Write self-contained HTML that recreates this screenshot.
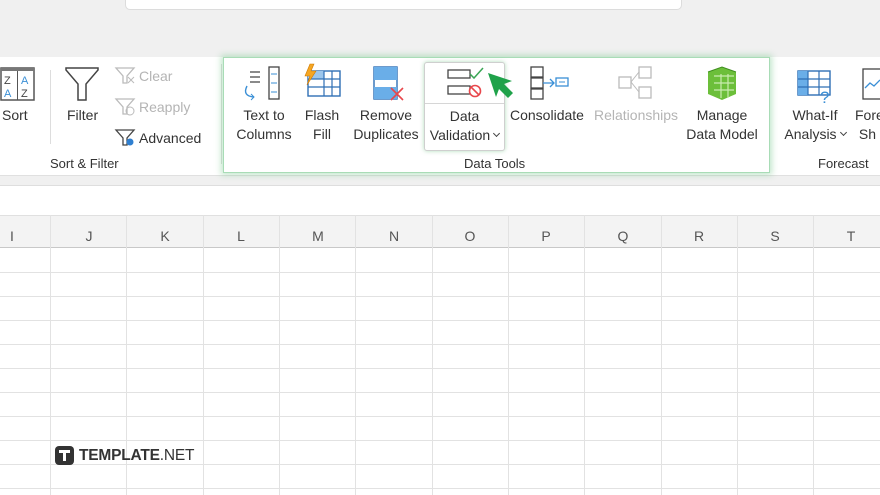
<!DOCTYPE html>
<html><head><meta charset="utf-8"><style>
*{margin:0;padding:0;box-sizing:border-box}
body{width:880px;height:495px;overflow:hidden;background:#fff;font-family:"Liberation Sans",sans-serif;position:relative;color:#333}
.a{position:absolute}
.t{position:absolute;font-size:14px;color:#333;text-align:center;line-height:19px;white-space:nowrap}
.g{color:#b4b4b4}
.col{position:absolute;top:228px;font-size:14px;color:#555;width:20px;text-align:center}
.ch{display:inline-block;width:5px;height:5px;border-right:1.2px solid #444;border-bottom:1.2px solid #444;transform:rotate(45deg);margin:0 0 4px 4px}
</style></head><body>
<div class="a" style="left:0;top:0;width:880px;height:57px;background:#f0f0f0"></div>
<div class="a" style="left:125px;top:-2px;width:557px;height:12px;background:#fff;border:1px solid #dcdcdc;border-radius:0 0 5px 5px"></div>
<div class="a" style="left:0;top:57px;width:880px;height:118px;background:#fff"></div>
<div class="a" style="left:0;top:175px;width:880px;height:11px;background:#f0f0f0;border-top:1px solid #e0e0e0;border-bottom:1px solid #dedede"></div>
<div class="a" style="left:0;top:215px;width:880px;height:33px;background:#f3f3f3;border-top:1px solid #e0e0e0;border-bottom:1px solid #c8c8c8"></div>
<svg class="a" style="left:0;top:215px" width="880" height="280">
<g stroke="#e2e2e2" stroke-width="1">
<line x1="50.5" y1="0" x2="50.5" y2="280"/><line x1="126.5" y1="0" x2="126.5" y2="280"/><line x1="203.5" y1="0" x2="203.5" y2="280"/><line x1="279.5" y1="0" x2="279.5" y2="280"/><line x1="355.5" y1="0" x2="355.5" y2="280"/><line x1="432.5" y1="0" x2="432.5" y2="280"/><line x1="508.5" y1="0" x2="508.5" y2="280"/><line x1="584.5" y1="0" x2="584.5" y2="280"/><line x1="661.5" y1="0" x2="661.5" y2="280"/><line x1="737.5" y1="0" x2="737.5" y2="280"/><line x1="813.5" y1="0" x2="813.5" y2="280"/>
<line x1="0" y1="57.5" x2="880" y2="57.5"/><line x1="0" y1="81.5" x2="880" y2="81.5"/><line x1="0" y1="105.5" x2="880" y2="105.5"/><line x1="0" y1="129.5" x2="880" y2="129.5"/><line x1="0" y1="153.5" x2="880" y2="153.5"/><line x1="0" y1="177.5" x2="880" y2="177.5"/><line x1="0" y1="201.5" x2="880" y2="201.5"/><line x1="0" y1="225.5" x2="880" y2="225.5"/><line x1="0" y1="249.5" x2="880" y2="249.5"/><line x1="0" y1="273.5" x2="880" y2="273.5"/>
</g></svg>
<div class="col" style="left:2px">I</div><div class="col" style="left:79px">J</div><div class="col" style="left:155px">K</div><div class="col" style="left:231px">L</div><div class="col" style="left:308px">M</div><div class="col" style="left:384px">N</div><div class="col" style="left:460px">O</div><div class="col" style="left:536px">P</div><div class="col" style="left:613px">Q</div><div class="col" style="left:689px">R</div><div class="col" style="left:765px">S</div><div class="col" style="left:841px">T</div>

<svg class="a" style="left:0;top:66px" width="36" height="36"><rect x="1" y="2" width="33" height="32" fill="none" stroke="#555" stroke-width="1.5"/><rect x="1" y="2" width="33" height="3" fill="#777"/><line x1="17.5" y1="5" x2="17.5" y2="34" stroke="#555"/><text x="4" y="18" font-size="11" fill="#444" font-family="Liberation Sans">Z</text><text x="4" y="31" font-size="11" fill="#3a8fd6" font-family="Liberation Sans">A</text><text x="21" y="18" font-size="11" fill="#3a8fd6" font-family="Liberation Sans">A</text><text x="21" y="31" font-size="11" fill="#444" font-family="Liberation Sans">Z</text></svg>
<div class="t" style="left:2px;top:106px">Sort</div>
<div class="a" style="left:50px;top:70px;width:1px;height:74px;background:#ddd"></div>
<svg class="a" style="left:65px;top:66px" width="36" height="36"><path d="M1 2 H33 V4 L21 18 V34 H13 V18 L1 4Z" fill="none" stroke="#444" stroke-width="1.5"/></svg>
<div class="t" style="left:67px;top:106px">Filter</div>
<svg class="a" style="left:114px;top:66px" width="24" height="20"><path d="M2 2H20L13 10V17H9V10Z" fill="none" stroke="#bbb" stroke-width="1.3"/><path d="M14 11l6 6M20 11l-6 6" stroke="#bbb"/></svg>
<div class="t g" style="left:139px;top:67px">Clear</div>
<svg class="a" style="left:114px;top:97px" width="24" height="20"><path d="M2 2H20L13 10V17H9V10Z" fill="none" stroke="#bbb" stroke-width="1.3"/><circle cx="16" cy="14" r="4" fill="none" stroke="#bbb"/></svg>
<div class="t g" style="left:139px;top:98px">Reapply</div>
<svg class="a" style="left:114px;top:128px" width="24" height="20"><path d="M2 2H20L13 10V17H9V10Z" fill="none" stroke="#444" stroke-width="1.3"/><circle cx="16" cy="14" r="3.5" fill="#2f7fd0"/></svg>
<div class="t" style="left:139px;top:129px">Advanced</div>
<div class="t" style="left:50px;top:154px;font-size:13px">Sort &amp; Filter</div>
<div class="a" style="left:221px;top:64px;width:1px;height:100px;background:#ddd"></div>

<div class="a" style="left:223px;top:57px;width:547px;height:116px;border:1px solid #a8dcb6;box-shadow:0 0 6px 2px rgba(120,200,140,.45)"></div>
<svg class="a" style="left:242px;top:66px" width="40" height="36"><path d="M8 6H18M8 11H18M8 16H18" stroke="#444" stroke-width="1.3"/><rect x="27" y="1" width="10" height="32" fill="none" stroke="#444" stroke-width="1.3"/><path d="M29 8h6M29 17h6M29 26h6" stroke="#3a8fd6"/><path d="M5 20 Q0 30 12 31" fill="none" stroke="#3a8fd6" stroke-width="1.4"/><path d="M9 28l3 3-3 3" fill="none" stroke="#3a8fd6"/></svg>
<div class="t" style="left:233px;top:106px;width:62px">Text to<br>Columns</div>
<svg class="a" style="left:302px;top:63px" width="40" height="36"><rect x="6" y="8" width="32" height="25" fill="none" stroke="#2f6fb5" stroke-width="1.4"/><rect x="6" y="8" width="16" height="8" fill="#9cc6ec"/><path d="M6 16H38M6 24H38M22 8V33M30 8V33" stroke="#2f6fb5" stroke-width="1.2"/><path d="M8 1L3 13H8L5 22L14 8H9L12 1Z" fill="#f5a623" stroke="#d07a00" stroke-width=".6"/></svg>
<div class="t" style="left:302px;top:106px;width:40px">Flash<br>Fill</div>
<svg class="a" style="left:371px;top:66px" width="36" height="36"><rect x="3" y="1" width="23" height="32" fill="#fff" stroke="#2f6fb5" stroke-width="1.4"/><rect x="3" y="1" width="23" height="13" fill="#6aaee8"/><rect x="3" y="21" width="23" height="12" fill="#6aaee8"/><path d="M20 22l12 12M32 22l-12 12" stroke="#e8474c" stroke-width="1.6"/></svg>
<div class="t" style="left:351px;top:106px;width:70px">Remove<br>Duplicates</div>

<div class="a" style="left:424px;top:62px;width:81px;height:89px;background:#fff;border:1px solid #cfcfcf;border-radius:3px;box-shadow:0 0 4px rgba(100,190,120,.5)"></div>
<div class="a" style="left:425px;top:103px;width:79px;height:1px;background:#d6d6d6"></div>
<svg class="a" style="left:444px;top:66px" width="42" height="34"><rect x="4" y="4" width="22" height="8" fill="none" stroke="#444" stroke-width="1.3"/><rect x="4" y="20" width="22" height="8" fill="none" stroke="#444" stroke-width="1.3"/><path d="M26 8l4 4 9-10" fill="none" stroke="#3aa655" stroke-width="1.5"/><circle cx="31" cy="25" r="5.5" fill="#fff" stroke="#e8474c" stroke-width="1.6"/><path d="M27 21l8 8" stroke="#e8474c" stroke-width="1.6"/></svg>
<svg class="a" style="left:486px;top:71px" width="30" height="32"><path d="M2 2L26 10 18 13 27 22 22 27 13 18 10 26Z" fill="#1fa24a"/></svg>
<div class="t" style="left:424px;top:107px;width:81px">Data<br>Validation<span class="ch"></span></div>

<svg class="a" style="left:530px;top:66px" width="40" height="36"><rect x="1" y="1" width="12" height="10" fill="none" stroke="#444" stroke-width="1.3"/><rect x="1" y="12" width="12" height="10" fill="none" stroke="#444" stroke-width="1.3"/><rect x="1" y="23" width="12" height="10" fill="none" stroke="#444" stroke-width="1.3"/><path d="M13 17H24M20 13l4 4-4 4" fill="none" stroke="#3a8fd6" stroke-width="1.3"/><rect x="26" y="12" width="12" height="8" fill="none" stroke="#3a8fd6" stroke-width="1.3"/><path d="M29 16h6" stroke="#3a8fd6"/></svg>
<div class="t" style="left:510px;top:106px">Consolidate</div>
<svg class="a" style="left:617px;top:66px" width="40" height="36"><rect x="2" y="11" width="12" height="11" fill="none" stroke="#bbb" stroke-width="1.3"/><rect x="22" y="1" width="12" height="11" fill="none" stroke="#bbb" stroke-width="1.3"/><rect x="22" y="21" width="12" height="11" fill="none" stroke="#bbb" stroke-width="1.3"/><path d="M14 16L22 6M14 16L22 26" stroke="#bbb"/></svg>
<div class="t g" style="left:594px;top:106px">Relationships</div>
<svg class="a" style="left:704px;top:66px" width="36" height="36"><path d="M4 6 L18 1 32 6 V28 L18 34 4 28Z" fill="#6cbf3a"/><path d="M10 10H30M10 17H30M10 24H30M17 8V32M24 8V32" stroke="#c9ecb0" stroke-width="1.2"/><path d="M4 6 L18 1 32 6" fill="none" stroke="#3f8f1f"/></svg>
<div class="t" style="left:684px;top:106px;width:76px">Manage<br>Data Model</div>
<div class="t" style="left:464px;top:154px;font-size:13px">Data Tools</div>

<svg class="a" style="left:796px;top:68px" width="40" height="36"><rect x="2" y="3" width="32" height="24" fill="#fff" stroke="#2f6fb5" stroke-width="1.4"/><rect x="2" y="3" width="10" height="24" fill="#6aaee8"/><path d="M2 11H34M2 19H34M12 3V27M23 3V27" stroke="#2f6fb5" stroke-width="1.2"/><text x="24" y="35" font-size="17" fill="#3a8fd6" font-family="Liberation Sans">?</text></svg>
<div class="t" style="left:782px;top:106px;width:66px">What-If<br>Analysis<span class="ch"></span></div>
<svg class="a" style="left:862px;top:68px" width="18" height="36"><rect x="1" y="1" width="20" height="30" fill="none" stroke="#444" stroke-width="1.3"/><path d="M3 20l5-5 4 3 6-6" fill="none" stroke="#3a8fd6" stroke-width="1.3"/></svg>
<div class="t" style="left:855px;top:106px;text-align:left">Fore<br>&nbsp;Sh</div>
<div class="t" style="left:818px;top:154px;font-size:13px">Forecast</div>

<div class="a" style="left:55px;top:446px;width:19px;height:19px;background:#333;border-radius:4px"></div>
<div class="a" style="left:59px;top:450px;width:11px;height:3px;background:#fff"></div>
<div class="a" style="left:63px;top:450px;width:3px;height:11px;background:#fff"></div>
<div class="a" style="left:79px;top:446px;font-size:15.5px;line-height:19px;color:#333;letter-spacing:-0.2px"><b>TEMPLATE</b>.NET</div>
</body></html>
